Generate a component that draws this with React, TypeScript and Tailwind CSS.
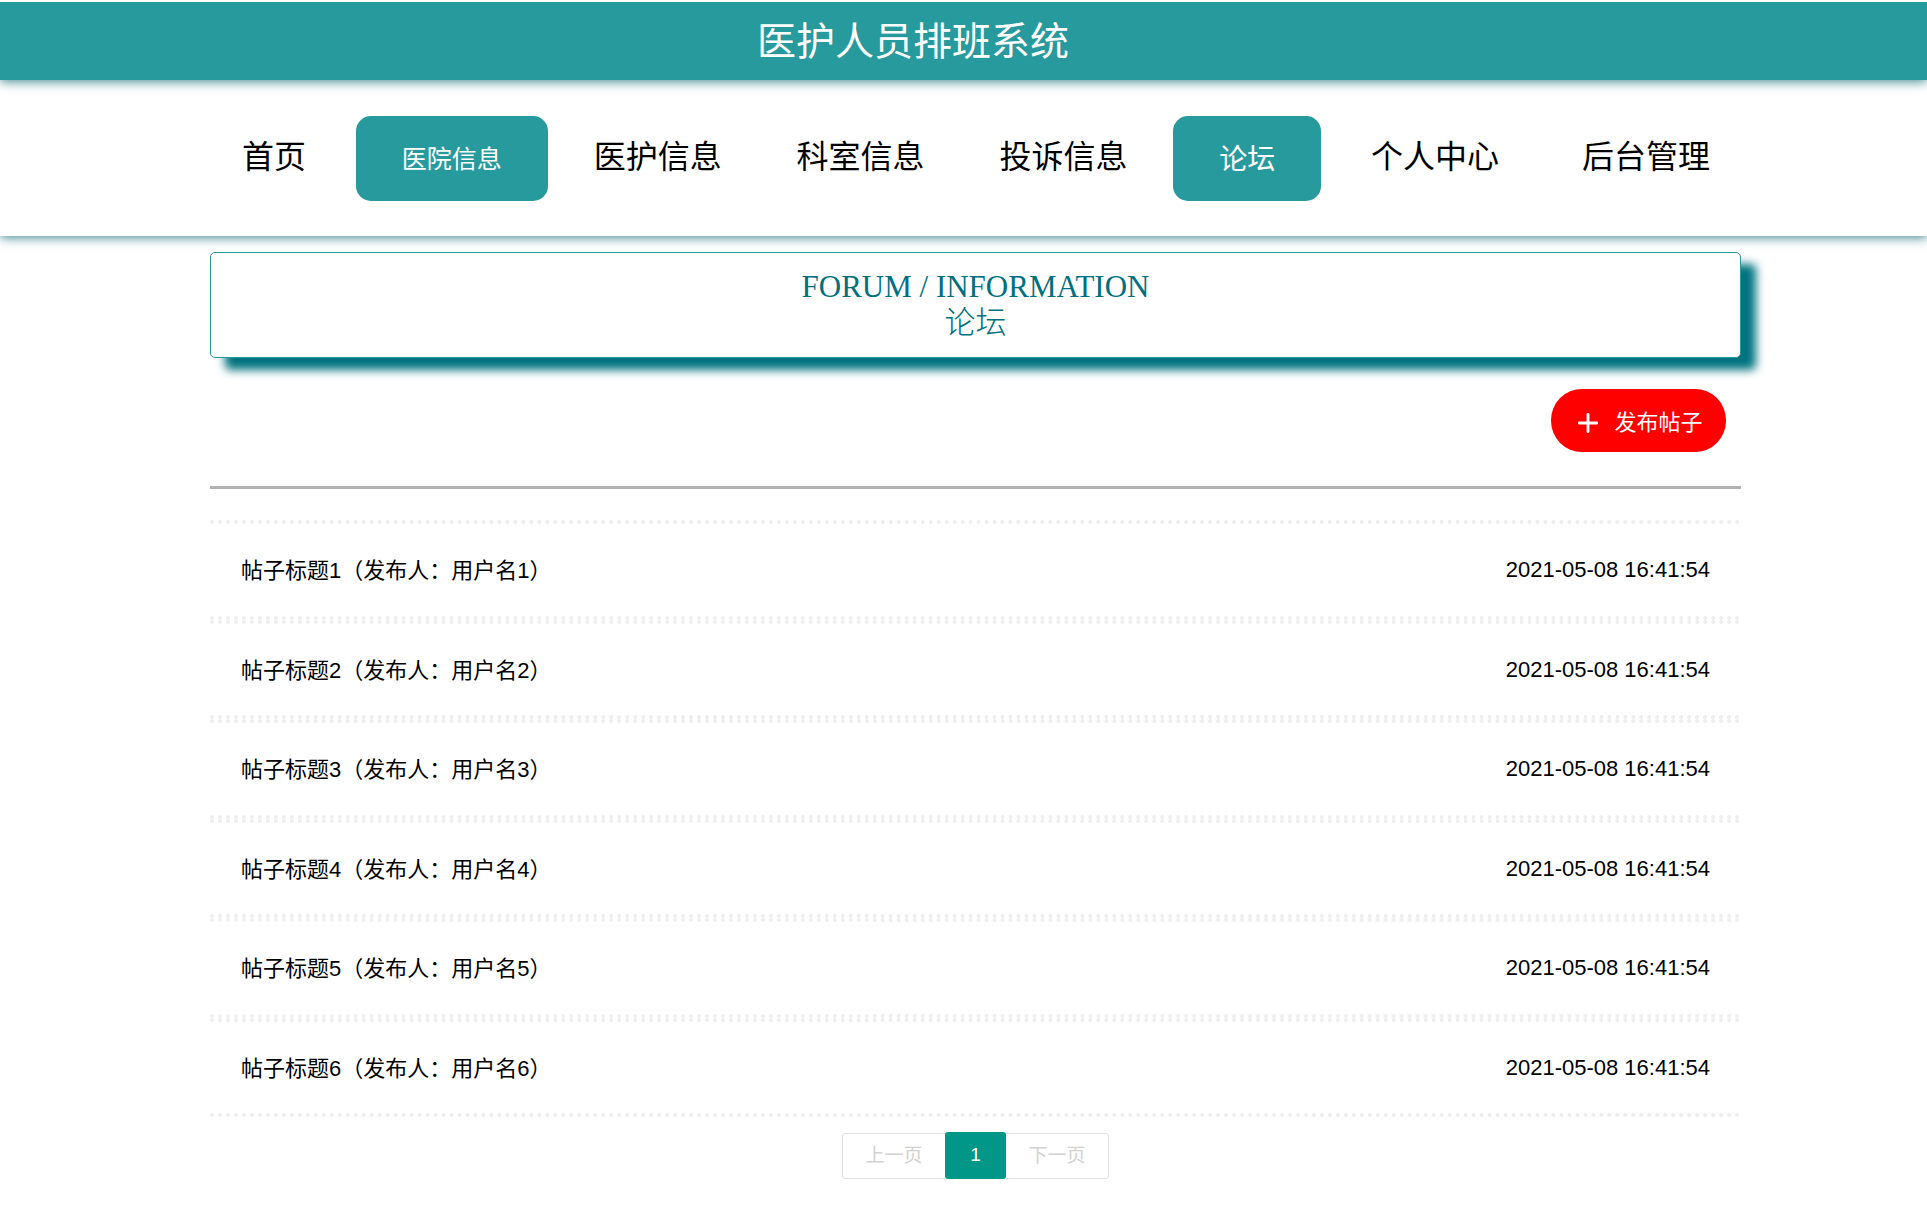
import React, { useState } from 'react'

interface NavItem {
  label: string
  variant: 'page' | 'info' | 'pill' | 'active'
}

interface Post {
  id: number
  title: string
  author: string
  createdAt: string
}

const navItems: NavItem[] = [
  { label: '首页', variant: 'page' },
  { label: '医院信息', variant: 'pill' },
  { label: '医护信息', variant: 'info' },
  { label: '科室信息', variant: 'info' },
  { label: '投诉信息', variant: 'info' },
  { label: '论坛', variant: 'active' },
  { label: '个人中心', variant: 'page' },
  { label: '后台管理', variant: 'page' },
]

const navStyles = {
  page: 'px-[33px] pb-1 text-[32px] text-black',
  info: 'px-[29px] pb-1 text-[32px] text-black',
  pill: 'px-[46px] pt-0.5 text-[25px] text-white bg-[#279a9d] rounded-[15px]',
  active: 'px-[46px] pt-0.5 text-[28px] text-white bg-[#279a9d] rounded-[15px]',
}

const posts: Post[] = [1, 2, 3, 4, 5, 6].map((n) => ({
  id: n,
  title: `帖子标题${n}`,
  author: `用户名${n}`,
  createdAt: '2021-05-08 16:41:54',
}))

function NavBar() {
  return (
    <nav className="bg-white pl-[209px] pr-[184px] pt-9 pb-[35px] shadow-[0_2px_10px_#005f69b3]">
      <ul className="flex justify-between">
        {navItems.map((item) => (
          <li key={item.label}>
            <a
              href="#"
              className={`flex h-[85px] items-center whitespace-nowrap ${navStyles[item.variant]}`}
            >
              {item.label}
            </a>
          </li>
        ))}
      </ul>
    </nav>
  )
}

function PostList() {
  return (
    <ul className="mt-[31px] text-[22px] leading-[23px]">
      {posts.map((post) => (
        <li
          key={post.id}
          className="flex items-center justify-between border-y-4 border-dotted border-[#eeeeee] px-[31px] py-[33px] odd:pb-[34px]"
        >
          <a href="#" className="pt-0.5 text-black">
            {post.title}（发布人：{post.author}）
          </a>
          <time className="text-black">{post.createdAt}</time>
        </li>
      ))}
    </ul>
  )
}

function Pagination() {
  const [page, setPage] = useState(1)

  return (
    <div className="mt-[15px] flex items-end justify-center text-[19px]">
      <button
        disabled
        className="h-[46px] w-[103px] rounded-l-[3px] border border-r-0 border-[#e2e2e2] text-[#d2d2d2]"
      >
        上一页
      </button>
      <button
        onClick={() => setPage(1)}
        className="h-[47px] w-[61px] rounded-[3px] bg-[#009688] text-white"
      >
        {page}
      </button>
      <button
        disabled
        className="h-[46px] w-[103px] rounded-r-[3px] border border-l-0 border-[#e2e2e2] text-[#d2d2d2]"
      >
        下一页
      </button>
    </div>
  )
}

export default function App() {
  return (
    <div className="min-h-screen bg-white font-['Liberation_Sans','Noto_Sans_CJK_SC',sans-serif]">
      <header className="relative z-10 border-t-2 border-white bg-[#279a9d] pt-0.5 pr-[101px] text-center shadow-[0_2px_10px_#005f69b3]">
        <h1 className="text-[39px] leading-[76px] text-white">医护人员排班系统</h1>
      </header>

      <NavBar />

      <main className="pl-[210px] pr-[186px] pt-4 pb-7">
        {/* Section title */}
        <div className="rounded-[5px] border border-[#279a9d] bg-white py-4 text-center font-['Liberation_Serif','Noto_Sans_CJK_SC',serif] text-[31px] leading-9 text-[#00707f] shadow-[15px_12px_10px_#00737f]">
          <p>FORUM / INFORMATION</p>
          <h2 className="font-light">论坛</h2>
        </div>

        {/* Actions */}
        <div className="mt-[31px] flex justify-end border-b-3 border-[#b2b2b2] pr-[15px] pb-[34px]">
          <button className="flex h-[63px] w-[175px] items-center justify-center gap-4 rounded-[31px] bg-[#ff0000] pt-1 pl-1 text-[22px] text-white">
            <svg width="20" height="20" viewBox="0 0 20 20" aria-hidden="true">
              <path d="M10 1.4V18.6M1.4 10H18.6" stroke="currentColor" strokeWidth="2.9" strokeLinecap="round" />
            </svg>
            发布帖子
          </button>
        </div>

        <PostList />
        <Pagination />
      </main>
    </div>
  )
}
